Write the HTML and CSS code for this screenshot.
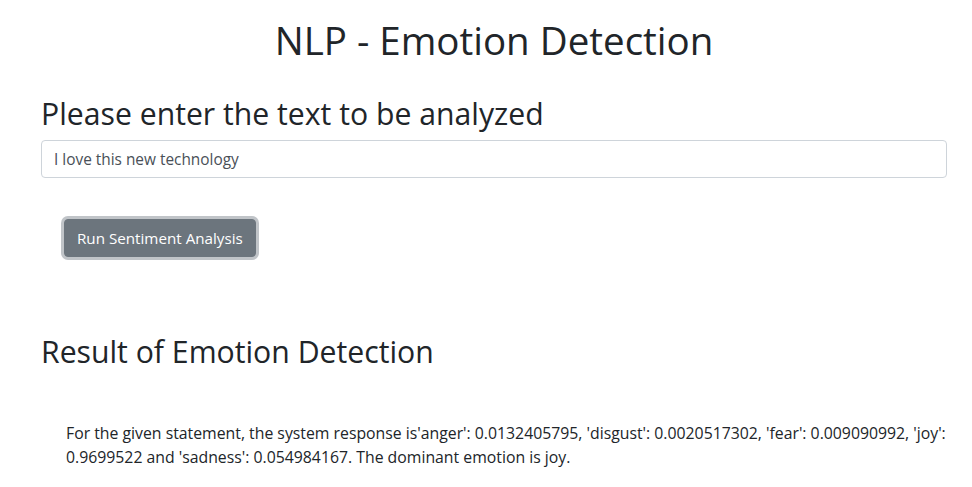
FILE: index.html
```html
<!DOCTYPE html>
<html lang="en">
<head>
<meta charset="utf-8">
<title>NLP - Emotion Detection</title>
<link rel="stylesheet" href="styles.css">
</head>
<body>
<div class="page">
  <h1 class="title">NLP - Emotion Detection</h1>
  <h2 class="heading">Please enter the text to be analyzed</h2>
  <input class="text-input" type="text" value="I love this new technology">
  <div class="actions">
    <button class="btn" type="button">Run Sentiment Analysis</button>
  </div>
  <h2 class="heading result-heading">Result of Emotion Detection</h2>
  <p class="result">For the given statement, the system response is'anger': 0.0132405795, 'disgust': 0.0020517302, 'fear': 0.009090992, 'joy': 0.9699522 and 'sadness': 0.054984167. The dominant emotion is joy.</p>
</div>
</body>
</html>
```
FILE: styles.css
```css
html, body {
  margin: 0;
  padding: 0;
  background: #fff;
}
body {
  font-family: "Open Sans", "Noto Sans", sans-serif;
  color: #212529;
  font-size: 16px;
  line-height: 1.5;
}
.page {
  padding: 16px 25px 0 41px;
}
.title {
  margin: 0;
  font-size: 38.5px;
  font-weight: 400;
  line-height: 48px;
  text-align: center;
}
.heading {
  margin: 31px 0 7px 0;
  font-size: 30.2px;
  font-weight: 400;
  line-height: 38px;
}
.text-input {
  display: block;
  box-sizing: border-box;
  width: 100%;
  height: 38px;
  margin: 0;
  padding: 6px 12px;
  font-family: inherit;
  font-size: 15.4px;
  color: #495057;
  background: #fff;
  border: 1px solid #ced4da;
  border-radius: 4px;
}
.actions {
  padding: 41px 0 0 23px;
}
.btn {
  box-sizing: border-box;
  height: 38px;
  padding: 6px 12px;
  font-family: inherit;
  font-size: 15.2px;
  line-height: 24px;
  color: #fff;
  background: #6c757d;
  border: 1px solid #6c757d;
  border-radius: 4px;
  box-shadow: 0 0 0 3px rgba(130, 138, 145, 0.5);
}
.result-heading {
  margin-top: 76px;
}
.result {
  margin: 50px -10px 0 0;
  padding-left: 25px;
  font-size: 15.8px;
  line-height: 24px;
}
```
